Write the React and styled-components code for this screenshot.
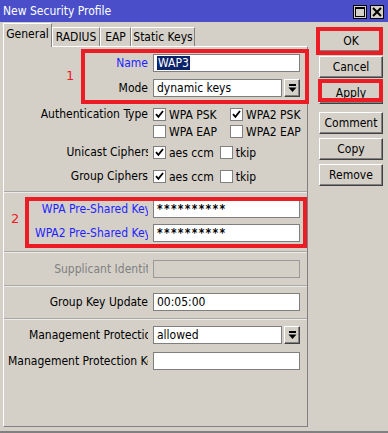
import React from "react";
import styled, { createGlobalStyle } from "styled-components";

const GlobalStyle = createGlobalStyle`
  html, body {
    margin: 0;
    padding: 0;
    background: #d4d0c8;
  }
  body {
    font-family: "DejaVu Sans Condensed", "Liberation Sans", sans-serif;
    font-size: 12px;
    color: #000;
  }
`;

const RED = "#ec1c24";

const Window = styled.div`
  position: relative;
  width: 388px;
  height: 433px;
  box-sizing: border-box;
  background: #d4d0c8;
  border-bottom: 2px solid #808080;
  display: flex;
  flex-direction: column;
  overflow: hidden;
`;

const TitleBar = styled.div`
  height: 22px;
  flex: none;
  background: #4a4fc9;
  color: #fff;
  display: flex;
  align-items: center;
  justify-content: space-between;
  padding: 0 4px 0 3px;
  font-size: 12px;
`;

const TitleButtons = styled.div`
  display: flex;
  gap: 3px;
  margin-top: 1px;
`;

const TitleButton = styled.div`
  width: 14px;
  height: 14px;
  box-sizing: border-box;
  background: #d4d0c8;
  border: 1px solid #000;
  display: flex;
  align-items: center;
  justify-content: center;
`;

const Body = styled.div`
  flex: 1;
  display: flex;
`;

const LeftPane = styled.div`
  width: 305px;
  margin-left: 3px;
  margin-bottom: 4px;
  display: flex;
  flex-direction: column;
`;

const Tabs = styled.div`
  height: 24px;
  flex: none;
  display: flex;
  align-items: flex-end;
  position: relative;
  z-index: 1;
`;

const Tab = styled.div`
  box-sizing: border-box;
  width: ${p => p.$w}px;
  height: ${p => (p.$active ? 24 : 19)}px;
  margin-bottom: ${p => (p.$active ? -1 : 0)}px;
  background: #d4d0c8;
  border-top: 1px solid #fff;
  border-left: 1px solid #fff;
  border-right: 1px solid #808080;
  display: flex;
  align-items: center;
  justify-content: center;
  padding-bottom: ${p => (p.$active ? 3 : 0)}px;
  font-size: 12px;
`;

const Panel = styled.div`
  flex: 1;
  box-sizing: border-box;
  border-top: 1px solid #fff;
  border-left: 1px solid #fff;
  border-right: 1px solid #808080;
  border-bottom: 1px solid #808080;
  padding: 7px 0 0 4px;
  display: flex;
  flex-direction: column;
`;

const Row = styled.div`
  display: flex;
  align-items: center;
  height: ${p => p.$h || 18}px;
  margin-top: ${p => p.$mt || 0}px;
`;

const Label = styled.div`
  width: 140px;
  margin-right: 5px;
  flex: none;
  text-align: right;
  white-space: nowrap;
  overflow: hidden;
  color: ${p => p.$color || "#000"};
  font-size: 12px;
  line-height: ${p => p.$lh || 18}px;
`;

const Clip = styled.span`
  margin-right: ${p => p.$cut || 0}px;
`;

const Input = styled.div`
  box-sizing: border-box;
  width: ${p => p.$w || 147}px;
  height: 18px;
  background: ${p => (p.$disabled ? "#d4d0c8" : "#fff")};
  border: 1px solid ${p => (p.$disabled ? "#9a9a9a" : "#7f7f7f")};
  padding-left: 3px;
  display: flex;
  align-items: center;
  white-space: nowrap;
  overflow: hidden;
  font-size: 12px;
  font-weight: ${p => (p.$bold ? "bold" : "normal")};
  letter-spacing: ${p => (p.$bold ? "1.3px" : "0")};
`;

const Selected = styled.span`
  background: #0a246a;
  color: #fff;
  padding: 0 1px;
  line-height: 14px;
`;

const DropButton = styled.div`
  box-sizing: border-box;
  width: 16px;
  height: 18px;
  margin-left: 2px;
  background: #d4d0c8;
  border-top: 1px solid #fff;
  border-left: 1px solid #fff;
  border-right: 1px solid #404040;
  border-bottom: 1px solid #404040;
  box-shadow: inset -1px -1px 0 #808080;
  display: flex;
  align-items: center;
  justify-content: center;
`;

const CheckGroup = styled.div`
  display: flex;
  align-items: center;
  width: ${p => (p.$w ? `${p.$w}px` : "auto")};
  margin-right: ${p => p.$mr || 0}px;
`;

const Box = styled.div`
  box-sizing: border-box;
  width: 13px;
  height: 13px;
  background: #fff;
  border: 1px solid #808080;
  margin-right: 3px;
  display: flex;
  align-items: center;
  justify-content: center;
  flex: none;
`;

const CheckText = styled.span`
  font-size: 12px;
  white-space: nowrap;
`;

const Separator = styled.div`
  height: 1px;
  background: #a8a8a8;
  margin: ${p => p.$mt}px 0 0 -4px;
  border-bottom: 1px solid #ecebe8;
`;

const RightPane = styled.div`
  flex: 1;
  display: flex;
  flex-direction: column;
  padding: 8px 0 0 11px;
`;

const Button = styled.div`
  box-sizing: border-box;
  width: 64px;
  height: 22px;
  margin-top: ${p => p.$mt || 0}px;
  background: #d4d0c8;
  border-top: 1px solid #fff;
  border-left: 1px solid #fff;
  border-right: 1px solid #404040;
  border-bottom: 1px solid ${p => (p.$default ? "#000" : "#404040")};
  box-shadow: inset -1px -1px 0 #808080${p => (p.$default ? ", 0 1px 0 #000" : "")};
  display: flex;
  align-items: center;
  justify-content: center;
  font-size: 12px;
`;

const Annotation = styled.div`
  position: absolute;
  left: ${p => p.$x}px;
  top: ${p => p.$y}px;
  width: ${p => p.$w}px;
  height: ${p => p.$h}px;
  box-sizing: border-box;
  border: 4px solid ${RED};
  pointer-events: none;
`;

const Marker = styled.div`
  position: absolute;
  left: ${p => p.$x}px;
  top: ${p => p.$y}px;
  color: ${RED};
  font-family: "DejaVu Sans", sans-serif;
  font-size: 13px;
`;

const DropIcon = () => (
  <svg width="9" height="9" viewBox="0 0 9 9">
    <rect x="1" y="0" width="7" height="2" fill="#000" />
    <path d="M0.5 3.5 H8.5 L4.5 8 Z" fill="#000" />
  </svg>
);

const CheckMark = () => (
  <svg width="9" height="9" viewBox="0 0 9 9">
    <path d="M1 4.2 L3.4 6.8 L8 1" stroke="#000" strokeWidth="1.8" fill="none" />
  </svg>
);

const Check = ({ checked, label, w, mr }) => (
  <CheckGroup $w={w} $mr={mr}>
    <Box>{checked && <CheckMark />}</Box>
    <CheckText>{label}</CheckText>
  </CheckGroup>
);

const BLUE = "#1f1fff";

export default function App() {
  return (
    <>
      <GlobalStyle />
      <Window>
        <TitleBar>
          <span>New Security Profile</span>
          <TitleButtons>
            <TitleButton>
              <svg width="10" height="10" viewBox="0 0 10 10">
                <rect x="0.5" y="0.5" width="9" height="9" fill="none" stroke="#000" />
                <rect x="0.5" y="0.5" width="9" height="1.5" fill="#000" />
              </svg>
            </TitleButton>
            <TitleButton>
              <svg width="10" height="10" viewBox="0 0 10 10">
                <path d="M1 1 L9 9 M9 1 L1 9" stroke="#000" strokeWidth="2" />
              </svg>
            </TitleButton>
          </TitleButtons>
        </TitleBar>
        <Body>
          <LeftPane>
            <Tabs>
              <Tab $w={49} $active>General</Tab>
              <Tab $w={48}>RADIUS</Tab>
              <Tab $w={31}>EAP</Tab>
              <Tab $w={64}>Static Keys</Tab>
            </Tabs>
            <Panel>
              <Row>
                <Label $color={BLUE}>Name</Label>
                <Input>
                  <Selected>WAP3</Selected>
                </Input>
              </Row>
              <Row $mt={7}>
                <Label>Mode</Label>
                <Input $w={129}>dynamic keys</Input>
                <DropButton>
                  <DropIcon />
                </DropButton>
              </Row>
              <Row $mt={9} $h={17}>
                <Label $lh={17}>Authentication Type</Label>
                <Check checked label="WPA PSK" w={77} />
                <Check checked label="WPA2 PSK" />
              </Row>
              <Row $h={17}>
                <Label $lh={17} />
                <Check label="WPA EAP" w={77} />
                <Check label="WPA2 EAP" />
              </Row>
              <Row $mt={4} $h={17}>
                <Label $lh={17}>
                  <Clip $cut={-3}>Unicast Ciphers</Clip>
                </Label>
                <Check checked label="aes ccm" mr={6} />
                <Check label="tkip" />
              </Row>
              <Row $mt={7} $h={17}>
                <Label $lh={17}>Group Ciphers</Label>
                <Check checked label="aes ccm" mr={6} />
                <Check label="tkip" />
              </Row>
              <Separator $mt={6} />
              <Row $mt={7}>
                <Label $color={BLUE}>
                  <Clip $cut={-3}>WPA Pre-Shared Key</Clip>
                </Label>
                <Input $bold>**********</Input>
              </Row>
              <Row $mt={6}>
                <Label $color={BLUE}>
                  <Clip $cut={-3}>WPA2 Pre-Shared Key</Clip>
                </Label>
                <Input $bold>**********</Input>
              </Row>
              <Separator $mt={9} />
              <Row $mt={7}>
                <Label $color="#808080">
                  <Clip $cut={-8}>Supplicant Identity</Clip>
                </Label>
                <Input $disabled />
              </Row>
              <Separator $mt={7} />
              <Row $mt={6}>
                <Label>Group Key Update</Label>
                <Input>00:05:00</Input>
              </Row>
              <Separator $mt={7} />
              <Row $mt={6}>
                <Label>
                  <Clip $cut={-10}>Management Protection</Clip>
                </Label>
                <Input $w={129}>allowed</Input>
                <DropButton>
                  <DropIcon />
                </DropButton>
              </Row>
              <Row $mt={8}>
                <Label>Management Protection Key</Label>
                <Input />
              </Row>
            </Panel>
          </LeftPane>
          <RightPane>
            <Button $default>OK</Button>
            <Button $mt={4}>Cancel</Button>
            <Button $mt={4}>Apply</Button>
            <Button $mt={8}>Comment</Button>
            <Button $mt={4}>Copy</Button>
            <Button $mt={4}>Remove</Button>
          </RightPane>
        </Body>
        <Annotation $x={81} $y={49} $w={228} $h={55} />
        <Annotation $x={25} $y={197} $w={282} $h={51} />
        <Annotation $x={316} $y={27} $w={67} $h={28} />
        <Annotation $x={318} $y={79} $w={65} $h={23} />
        <Marker $x={66} $y={68}>1</Marker>
        <Marker $x={11} $y={211}>2</Marker>
      </Window>
    </>
  );
}
